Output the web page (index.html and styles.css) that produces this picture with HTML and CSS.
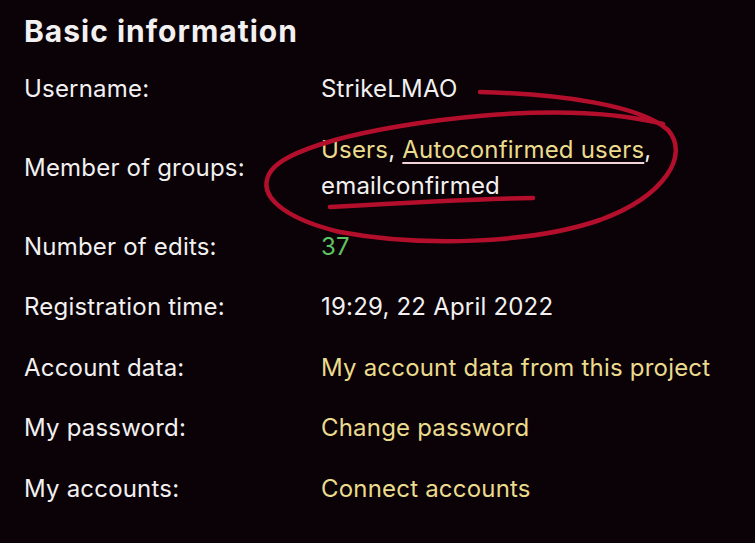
FILE: index.html
```html
<!DOCTYPE html>
<html lang="en">
<head>
<meta charset="utf-8">
<title>Basic information</title>
<link rel="stylesheet" href="styles.css">
</head>
<body>
<main class="page">
  <h2 class="title">Basic information</h2>
  <div class="info">
    <div class="label">Username:</div>
    <div class="value">StrikeLMAO</div>

    <div class="label">Member of groups:</div>
    <div class="value"><a class="link">Users</a>, <a class="link under">Autoconfirmed users</a>,<br>emailconfirmed</div>

    <div class="label">Number of edits:</div>
    <div class="value"><a class="count">37</a></div>

    <div class="label">Registration time:</div>
    <div class="value">19:29, 22 April 2022</div>

    <div class="label">Account data:</div>
    <div class="value"><a class="link">My account data from this project</a></div>

    <div class="label">My password:</div>
    <div class="value"><a class="link">Change password</a></div>

    <div class="label">My accounts:</div>
    <div class="value"><a class="link">Connect accounts</a></div>
  </div>
  <svg class="markup" viewBox="0 0 755 543" width="755" height="543" aria-hidden="true">
    <path d="M480,92 C560,94 640,105 668,130 C690,155 665,196 600,220 C530,244 420,247 340,232 C290,220 262,200 267,180 C270,162 300,150 335,140 C400,122 560,98 663,124" />
    <path d="M330,207 C400,203 470,199 533,198" />
  </svg>
</main>
</body>
</html>
```
FILE: styles.css
```css
html, body {
  margin: 0;
  padding: 0;
  background: #0a0206;
}
.page {
  position: relative;
  width: 755px;
  height: 543px;
  box-sizing: border-box;
  padding: 13px 24px 0;
  overflow: hidden;
  font-family: Inter, "Noto Sans", sans-serif;
  color: #f2f0f0;
}
.title {
  margin: 0 0 10px;
  font-size: 30px;
  line-height: 36px;
  font-weight: 700;
  letter-spacing: 1px;
}
.info {
  display: grid;
  grid-template-columns: 297px 1fr;
  font-size: 24px;
  line-height: 36.5px;
  letter-spacing: 0.2px;
}
.label, .value {
  padding: 12px 0;
  align-self: center;
}
.link { color: #eadb8d; text-decoration: none; }
.under {
  text-decoration: underline;
  text-decoration-color: #f3d2da;
  text-decoration-thickness: 2px;
  text-underline-offset: 4px;
}
.count { color: #5ec462; text-decoration: none; }
.markup {
  position: absolute;
  top: 0;
  left: 0;
  pointer-events: none;
  fill: none;
  stroke: #b30f2c;
  stroke-width: 4.5;
  stroke-linecap: round;
  stroke-linejoin: round;
}
```
